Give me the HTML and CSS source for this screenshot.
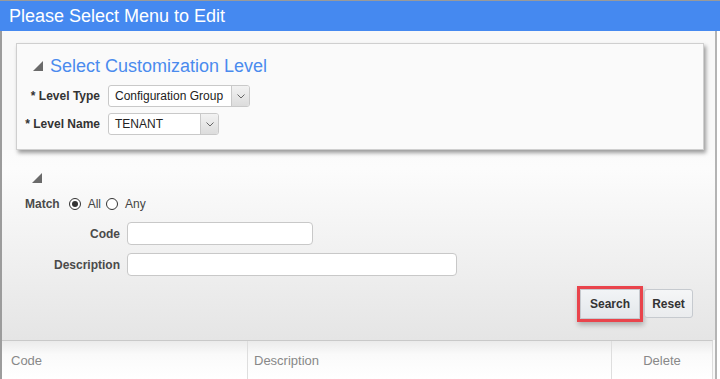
FILE: index.html
```html
<!DOCTYPE html>
<html>
<head>
<meta charset="utf-8">
<title>Please Select Menu to Edit</title>
<link rel="stylesheet" href="styles.css">
</head>
<body>
<div class="page">
  <div class="header">Please Select Menu to Edit</div>
  <div class="main">
    <section class="card">
      <h2 class="card-title"><span class="tri"></span>Select Customization Level</h2>
      <div class="level-grid">
        <label class="lbl">* Level Type</label>
        <div class="select sel-type">
          <span class="sel-text">Configuration Group</span>
          <span class="sel-btn"><svg width="8" height="5" viewBox="0 0 8 5"><path d="M0.5 0.5 L4 4 L7.5 0.5" fill="none" stroke="#666" stroke-width="1"/></svg></span>
        </div>
        <label class="lbl">* Level Name</label>
        <div class="select sel-name">
          <span class="sel-text">TENANT</span>
          <span class="sel-btn"><svg width="8" height="5" viewBox="0 0 8 5"><path d="M0.5 0.5 L4 4 L7.5 0.5" fill="none" stroke="#666" stroke-width="1"/></svg></span>
        </div>
      </div>
    </section>
    <section class="search">
      <span class="tri tri-search"></span>
      <div class="match">
        <span class="match-lbl">Match</span>
        <span class="radio checked"></span><span class="opt">All</span>
        <span class="radio"></span><span class="opt">Any</span>
      </div>
      <div class="fields">
        <label class="flbl">Code</label><div class="input in-code"></div>
        <label class="flbl">Description</label><div class="input in-desc"></div>
      </div>
      <div class="buttons">
        <button class="btn btn-search">Search</button>
        <button class="btn btn-reset">Reset</button>
      </div>
    </section>
    <div class="table-head">
      <div class="th th-code">Code</div>
      <div class="th th-desc">Description</div>
      <div class="th th-del">Delete</div>
    </div>
  </div>
</div>
</body>
</html>
```

FILE: styles.css
```css
* { box-sizing: border-box; }
html, body { margin: 0; padding: 0; background: #ffffff; }
body { font-family: "Liberation Sans", Arial, sans-serif; }

.page {
  width: 720px;
  height: 379px;
  overflow: hidden;
  border-top: 1px solid #9a9a9a;
}

.header {
  height: 30px;
  line-height: 30px;
  background: #4589f0;
  color: #ffffff;
  font-size: 18px;
  padding-left: 9px;
  white-space: nowrap;
}

.main {
  width: 717px;
  height: 348px;
  border-left: 2px solid #9c9c9c;
  border-right: 2px solid #b4b4b4;
  background: #f8f8f8;
  padding-top: 12px;
  display: flex;
  flex-direction: column;
}

.card {
  margin-left: 14px;
  width: 688px;
  height: 107px;
  flex: none;
  background: #fafafa;
  border: 1px solid #cfcfcf;
  box-shadow: 2px 3px 4px rgba(0, 0, 0, 0.38);
  position: relative;
  z-index: 1;
}

.card-title {
  margin: 11px 0 0 16px;
  height: 22px;
  display: flex;
  align-items: center;
  gap: 7px;
  font-size: 18px;
  font-weight: normal;
  color: #4a8bee;
  white-space: nowrap;
}

.tri {
  display: inline-block;
  width: 0;
  height: 0;
  border-style: solid;
  border-width: 0 0 10px 10px;
  border-color: transparent transparent #6a6a6a transparent;
  flex: none;
}

.level-grid {
  margin-top: 8px;
  display: grid;
  grid-template-columns: 83px auto;
  column-gap: 8px;
  row-gap: 6px;
  justify-content: start;
}

.lbl {
  font-size: 12px;
  font-weight: bold;
  color: #333;
  text-align: right;
  align-self: center;
  white-space: nowrap;
}

.select {
  height: 22px;
  display: flex;
  align-items: stretch;
  background: #fff;
  border: 1px solid #c9c9c9;
  border-radius: 3px;
  overflow: hidden;
}
.sel-type { width: 142px; }
.sel-name { width: 111px; }

.sel-text {
  flex: 1;
  font-size: 12px;
  color: #222;
  padding-left: 6px;
  line-height: 20px;
  white-space: nowrap;
}

.sel-btn {
  width: 18px;
  flex: none;
  border-left: 1px solid #c9c9c9;
  background: linear-gradient(#f2f2f2, #dcdcdc);
  display: flex;
  align-items: center;
  justify-content: center;
}

.search {
  flex: 1;
  display: flex;
  flex-direction: column;
  background: linear-gradient(#fbfbfb 0%, #fcfcfc 10%, #e5e5e5 100%);
}

.tri-search {
  margin: 23px 0 0 30px;
}

.match {
  margin: 13px 0 0 23px;
  height: 16px;
  display: flex;
  align-items: center;
  font-size: 12px;
  color: #333;
}
.match-lbl {
  font-weight: bold;
  color: #4a4a4a;
  margin-right: 9px;
}
.radio {
  width: 12px;
  height: 12px;
  border: 1px solid #333;
  border-radius: 50%;
  background: #fff;
  display: inline-flex;
  align-items: center;
  justify-content: center;
  margin-right: 7px;
  flex: none;
}
.radio.checked::after {
  content: "";
  width: 6px;
  height: 6px;
  border-radius: 50%;
  background: #333;
}
.opt { margin-right: 5px; color: #444; }

.fields {
  margin-top: 10px;
  display: grid;
  grid-template-columns: 118px auto;
  column-gap: 7px;
  row-gap: 8px;
  justify-content: start;
}
.flbl {
  font-size: 12px;
  font-weight: bold;
  color: #4a4a4a;
  text-align: right;
  align-self: center;
}
.input {
  height: 23px;
  background: #fff;
  border: 1px solid #c8c8c8;
  border-radius: 4px;
}
.in-code { width: 186px; }
.in-desc { width: 330px; }

.buttons {
  margin-top: 13px;
  padding-right: 22px;
  display: flex;
  justify-content: flex-end;
  gap: 4px;
}
.btn {
  height: 30px;
  font-family: "Liberation Sans", Arial, sans-serif;
  font-size: 12px;
  font-weight: bold;
  color: #333;
  border: 1px solid #c6cacf;
  border-radius: 3px;
  background: linear-gradient(#f2f4f6, #e3e7eb);
  padding: 0;
}
.btn-search {
  width: 60px;
  border-radius: 0;
  box-shadow: 0 0 0 3px #e9444c, 1px 3px 5px 3px rgba(0, 0, 0, 0.25);
}
.btn-reset {
  width: 49px;
  height: 29px;
  background: linear-gradient(#f5f6f7, #eaecee);
}

.table-head {
  height: 39px;
  flex: none;
  margin-right: 2px;
  border-top: 1px solid #c9c9c9;
  border-right: 1px solid #dcdcdc;
  background: linear-gradient(#ebebeb 0%, #fafafa 35%, #ffffff 100%);
  display: flex;
  font-size: 13px;
  color: #888;
}
.th {
  display: flex;
  align-items: center;
}
.th-code { width: 246px; padding-left: 9px; border-right: 1px solid #dedede; }
.th-desc { width: 364px; padding-left: 6px; border-right: 1px solid #dedede; }
.th-del { flex: 1; justify-content: center; }
```
